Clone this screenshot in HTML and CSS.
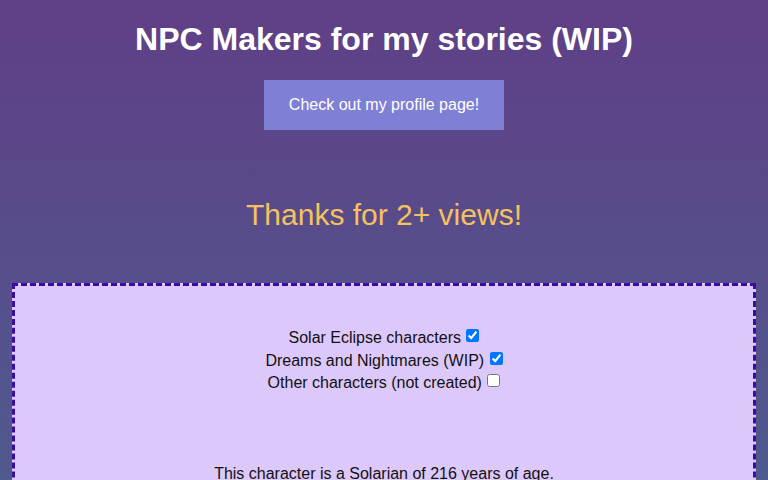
FILE: index.html
```html
<!DOCTYPE html>
<html>
<head>
<meta charset="utf-8">
<link rel="stylesheet" href="styles.css">
</head>
<body>
<header class="top">
  <h1 class="title">NPC Makers for my stories (WIP)</h1>
  <a class="profile-btn" href="#">Check out my profile page!</a>
  <h2 class="thanks">Thanks for 2+ views!</h2>
</header>
<main class="panel">
  <div class="filters">
    <label>Solar Eclipse characters <input type="checkbox" checked></label><br>
    <label>Dreams and Nightmares (WIP) <input type="checkbox" checked></label><br>
    <label>Other characters (not created) <input type="checkbox"></label>
  </div>
  <p class="desc">This character is a Solarian of 216 years of age.</p>
</main>
</body>
</html>
```
FILE: styles.css
```css
html {
  min-height: 100%;
  background: linear-gradient(180deg, #603f87 0px, #4f5a8e 480px);
}
body {
  margin: 0;
  padding: 0 12px;
  font-family: "Liberation Sans", Arial, sans-serif;
  font-size: 16px;
  text-align: center;
  color: #111;
}
.top {
  display: flex;
  flex-direction: column;
  align-items: center;
}
.title {
  color: #fff;
  font-size: 32px;
  font-weight: bold;
  margin: 21px 0 0;
  line-height: 37px;
}
.profile-btn {
  display: block;
  margin-top: 22px;
  width: 240px;
  height: 50px;
  line-height: 50px;
  background: #7f7fd5;
  color: #fff;
  text-decoration: none;
  font-size: 16px;
}
.thanks {
  color: #f4c25e;
  font-size: 30px;
  font-weight: normal;
  margin: 68px 0 0;
  line-height: 34px;
}
.panel {
  margin-top: 51px;
  background: #dcc8fb;
  border: 3px dashed #3a0ca3;
  padding: 41px 0 0;
  min-height: 300px;
}
.filters {
  line-height: 22.5px;
}
.filters input {
  margin: 0 0 0 1px;
  vertical-align: 1px;
}
.desc {
  margin: 70px 0 0;
}
```
